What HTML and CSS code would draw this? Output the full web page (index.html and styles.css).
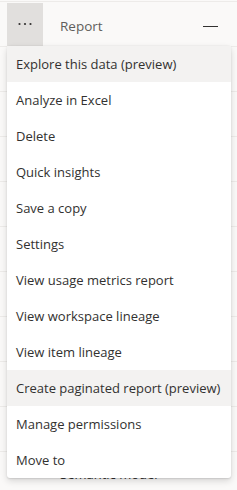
FILE: index.html
```html
<!DOCTYPE html>
<html lang="en">
<head>
    <meta charset="UTF-8">
    <meta name="viewport" content="width=device-width, initial-scale=1.0">
    <title>Report</title>
    <link rel="stylesheet" href="styles.css">
</head>
<body>
    <!-- Table behind the menu -->
    <div class="list">
        <div class="list-header">
            <button class="more-btn" aria-label="More options">
                <svg width="16" height="16" viewBox="0 0 16 16">
                    <circle cx="2.5" cy="8" r="1.1" fill="#323130"/>
                    <circle cx="8" cy="8" r="1.1" fill="#323130"/>
                    <circle cx="13.5" cy="8" r="1.1" fill="#323130"/>
                </svg>
            </button>
            <span class="col-title">Report</span>
            <span class="col-dash"></span>
        </div>
        <div class="list-row"></div>
        <div class="list-row"></div>
        <div class="list-row"></div>
        <div class="list-row"></div>
        <div class="list-row"></div>
        <div class="list-row"></div>
        <div class="list-row"></div>
        <div class="list-row"></div>
        <div class="list-row"></div>
        <div class="list-row"><span>Semantic model</span></div>
    </div>

    <!-- Context menu -->
    <ul class="context-menu">
        <li class="active">Explore this data (preview)</li>
        <li>Analyze in Excel</li>
        <li>Delete</li>
        <li>Quick insights</li>
        <li>Save a copy</li>
        <li>Settings</li>
        <li>View usage metrics report</li>
        <li>View workspace lineage</li>
        <li>View item lineage</li>
        <li class="active">Create paginated report (preview)</li>
        <li>Manage permissions</li>
        <li>Move to</li>
    </ul>
</body>
</html>
```
FILE: styles.css
```css
* {
    margin: 0;
    padding: 0;
    box-sizing: border-box;
}

body {
    font-family: "Open Sans", Arial, sans-serif;
    font-size: 13px;
    color: #323130;
    background-color: #faf9f8;
    overflow: hidden;
}

/* Table */
.list {
    padding-top: 1px;
}

.list-header {
    display: flex;
    align-items: center;
    height: 46px;
    border-top: 1px solid #edebe9;
    border-bottom: 1px solid #edebe9;
}

.more-btn {
    display: flex;
    align-items: center;
    justify-content: center;
    width: 36px;
    height: 43px;
    margin-left: 7px;
    border: none;
    background-color: #e1dfdd;
}

.col-title {
    margin-left: 17px;
    margin-top: 3px;
    color: #605e5c;
    font-size: 13.5px;
}

.col-dash {
    width: 15px;
    height: 1px;
    margin-left: auto;
    margin-right: 19px;
    margin-top: 5px;
    background-color: #323130;
}

.list-row {
    display: flex;
    align-items: center;
    height: 45px;
    padding-left: 60px;
    border-bottom: 1px solid #edebe9;
}

/* Context menu */
.context-menu {
    position: absolute;
    top: 46px;
    left: 7px;
    width: 224px;
    list-style: none;
    background: white;
    border-radius: 3px;
    box-shadow: 0 3px 7px rgba(0, 0, 0, 0.14), 0 0.6px 1.8px rgba(0, 0, 0, 0.11);
}

.context-menu li {
    height: 36px;
    line-height: 36px;
    padding-left: 9px;
    white-space: nowrap;
    cursor: pointer;
}

.context-menu li.active {
    background-color: #f3f2f1;
}
```
